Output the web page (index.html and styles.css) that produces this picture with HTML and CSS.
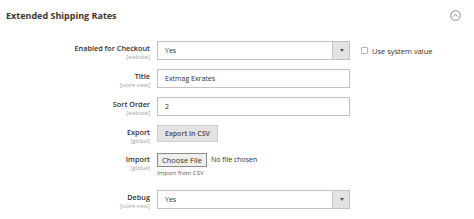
FILE: index.html
```html
<!DOCTYPE html>
<html lang="en">
<head>
    <meta charset="UTF-8">
    <title>Extended Shipping Rates</title>
    <link rel="stylesheet" href="styles.css">
</head>
<body>
    <div class="section">
        <div class="head">
            <div class="headTitle">Extended Shipping Rates</div>
            <svg class="toggle" width="11" height="11" viewBox="0 0 11 11">
                <circle cx="5.5" cy="5.5" r="4.8" fill="none" stroke="#8a8a8a" stroke-width="1"/>
                <path d="M3.3 6.6 L5.5 4.4 L7.7 6.6" fill="none" stroke="#8a8a8a" stroke-width="1"/>
            </svg>
        </div>

        <div class="rows">
            <div class="row">
                <div class="label">Enabled for Checkout<span class="scope">[website]</span></div>
                <div class="control">
                    <div class="select"><span>Yes</span><i class="arrow"></i></div>
                </div>
                <div class="system"><span class="check"></span>Use system value</div>
            </div>

            <div class="row">
                <div class="label">Title<span class="scope">[store view]</span></div>
                <div class="control">
                    <div class="input">Extmag Exrates</div>
                </div>
            </div>

            <div class="row">
                <div class="label">Sort Order<span class="scope">[website]</span></div>
                <div class="control">
                    <div class="input">2</div>
                </div>
            </div>

            <div class="row short">
                <div class="label">Export<span class="scope">[global]</span></div>
                <div class="control">
                    <div class="button">Export in CSV</div>
                </div>
            </div>

            <div class="row">
                <div class="label">Import<span class="scope">[global]</span></div>
                <div class="control">
                    <div class="file"><span class="chooser">Choose File</span>No file chosen</div>
                    <div class="note">Import from CSV</div>
                </div>
            </div>

            <div class="row">
                <div class="label">Debug<span class="scope">[store view]</span></div>
                <div class="control">
                    <div class="select"><span>Yes</span><i class="arrow"></i></div>
                </div>
            </div>
        </div>
    </div>
</body>
</html>
```
FILE: styles.css
```css
*{
    margin: 0;
    padding: 0;
    box-sizing: border-box;
}
body{
    background: #fff;
    font-family: "Open Sans", "DejaVu Sans", sans-serif;
    color: #303030;
    width: 474px;
    height: 219px;
    overflow: hidden;
}
.head{
    display: flex;
    align-items: center;
    justify-content: space-between;
    height: 30px;
    padding: 0 13px 0 6px;
}
.headTitle{
    font-size: 9px;
    font-weight: 700;
    color: #41362f;
}
.toggle{
    display: block;
}
.rows{
    padding-top: 11px;
}
.row{
    display: flex;
    margin-bottom: 8px;
}
.row.short{
    margin-bottom: 7px;
}
.label{
    width: 150px;
    text-align: right;
    font-size: 7.3px;
    font-weight: 600;
    line-height: 10px;
    padding-top: 2px;
}
.scope{
    display: block;
    font-size: 5.6px;
    font-weight: 400;
    color: #a0a0a0;
    line-height: 8px;
}
.control{
    width: 193px;
    margin-left: 7px;
}
.select, .input{
    display: flex;
    align-items: center;
    height: 19px;
    border: 1px solid #c2c2c2;
    font-size: 7px;
    color: #303030;
    padding-left: 7px;
}
.select span{
    flex: 1;
}
.arrow{
    width: 17px;
    height: 100%;
    background: #e3e3e3;
    border-left: 1px solid #c2c2c2;
    position: relative;
}
.arrow:after{
    content: "";
    position: absolute;
    left: 7px;
    top: 7px;
    border-left: 2px solid transparent;
    border-right: 2px solid transparent;
    border-top: 3px solid #555;
}
.system{
    display: flex;
    align-items: center;
    margin-left: 11px;
    height: 19px;
    font-size: 7.5px;
    color: #303030;
}
.check{
    width: 7px;
    height: 7px;
    border: 1px solid #b5b5b5;
    border-radius: 1px;
    margin-right: 4px;
}
.button{
    width: max-content;
    height: 17px;
    line-height: 15px;
    padding: 0 7px;
    background: #e3e3e3;
    border: 1px solid #cfcfcf;
    font-size: 7px;
    font-weight: 600;
    color: #514943;
}
.file{
    display: flex;
    align-items: center;
    height: 15px;
    font-size: 7px;
    color: #303030;
}
.chooser{
    display: inline-block;
    height: 14px;
    line-height: 12px;
    padding: 0 4px;
    border: 1px solid #8a8a8a;
    background: #efefef;
    margin-right: 4px;
    font-size: 7.5px;
}
.note{
    font-size: 6px;
    color: #555;
    margin-top: 2px;
    margin-bottom: 5px;
}
```
